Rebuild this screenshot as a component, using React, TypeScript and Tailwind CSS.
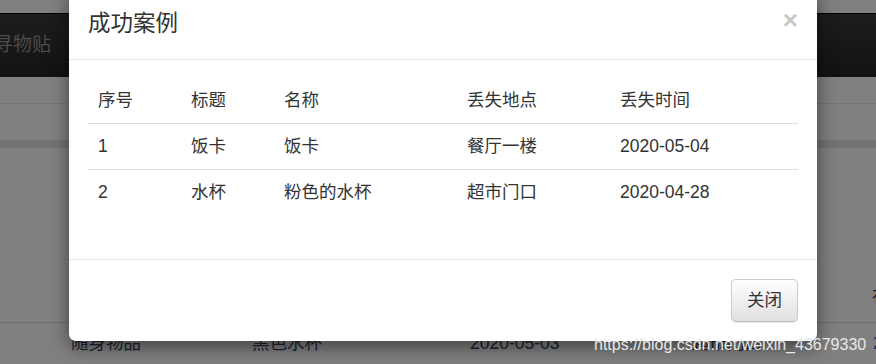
const cjk = "font-['Liberation_Sans','Noto_Sans_CJK_SC',sans-serif]";

const rows = [
    { id: "1", title: "饭卡", name: "饭卡", place: "餐厅一楼", date: "2020-05-04" },
    { id: "2", title: "水杯", name: "粉色的水杯", place: "超市门口", date: "2020-04-28" },
];

function Page() {
    return (
        <div className="flex flex-col w-full h-full">
            <div className="h-[13px] shrink-0" />
            <div className="h-[64px] shrink-0 border-t border-black bg-gradient-to-b from-[#1d1d1d] to-[#121212] flex items-center">
                <span className="ml-[-6px] text-[19px] text-[#4c4c4c]">寻物贴</span>
            </div>
            <div className="h-[26px] shrink-0" />
            <div className="h-px shrink-0 bg-[#767676]" />
            <div className="h-[36px] shrink-0" />
            <div className="h-[8px] shrink-0 bg-[#737373]" />
            <div className="h-[174px] shrink-0 flex items-end">
                <span className="ml-[872px] mb-[13px] text-[17.5px] leading-[25px] text-[#1a1a1a] whitespace-nowrap">布</span>
            </div>
            <div className="h-px shrink-0 bg-[#6e6e6e]" />
            <div className="flex items-center h-[44px] text-[17.5px] text-[#1a2230] whitespace-nowrap">
                <span className="shrink-0 ml-[71px] w-[181px]">随身物品</span>
                <span className="shrink-0 w-[218px]">黑色水杯</span>
                <span className="shrink-0 w-[222px]">2020-05-03</span>
                <span className="shrink-0 w-[181px]">超市门口</span>
                <span className="shrink-0 text-[#23345a]">2</span>
            </div>
        </div>
    );
}

function Modal() {
    return (
        <div className="absolute left-[69px] top-[-11px] w-[748px] rounded-[7px] bg-white shadow-[0_6px_19px_rgba(0,0,0,0.5)] text-[#333]">
            <div className="h-[71px] border-b border-[#e5e5e5] px-[19px] pt-[19px] flex justify-between items-start">
                <h4 className="text-[22.5px] leading-[32px]">成功案例</h4>
                <button className="mt-[-1px] text-[26px] leading-none font-bold text-[#c8c8c8]">×</button>
            </div>
            <div className="h-[199px] px-[19px] pt-[18px]">
                <table className="w-full text-[17.5px] leading-[25px] border-collapse">
                    <thead>
                        <tr className="border-b border-[#ddd]">
                            <th className="w-[93px] px-[10px] py-[10px] text-left font-normal">序号</th>
                            <th className="w-[93px] px-[10px] py-[10px] text-left font-normal">标题</th>
                            <th className="w-[183px] px-[10px] py-[10px] text-left font-normal">名称</th>
                            <th className="w-[153px] px-[10px] py-[10px] text-left font-normal">丢失地点</th>
                            <th className="px-[10px] py-[10px] text-left font-normal">丢失时间</th>
                        </tr>
                    </thead>
                    <tbody>
                        {rows.map((row, index) => (
                            <tr key={row.id} className={index > 0 ? "border-t border-[#ddd]" : ""}>
                                <td className="px-[10px] py-[10px]">{row.id}</td>
                                <td className="px-[10px] py-[10px]">{row.title}</td>
                                <td className="px-[10px] py-[10px]">{row.name}</td>
                                <td className="px-[10px] py-[10px]">{row.place}</td>
                                <td className="px-[10px] py-[10px]">{row.date}</td>
                            </tr>
                        ))}
                    </tbody>
                </table>
            </div>
            <div className="border-t border-[#e5e5e5] p-[19px] flex justify-end">
                <button className="h-[43px] w-[67px] rounded-[5px] border border-[#ccc] border-b-[#bbb] bg-gradient-to-b from-white to-[#e0e0e0] text-[17.5px] text-[#333] shadow-[0_1px_1px_rgba(0,0,0,0.08)]">
                    关闭
                </button>
            </div>
        </div>
    );
}

export default function App() {
    return (
        <div className={`relative w-[876px] h-[364px] overflow-hidden bg-[#808080] ${cjk}`}>
            <Page />
            <Modal />
            {/* watermark */}
            <span className="absolute left-[594px] top-[335px] text-[16px] leading-[20px] text-[#e8e8e8] whitespace-nowrap font-['Liberation_Sans',sans-serif]">
                https://blog.csdn.net/weixin_43679330
            </span>
        </div>
    );
}
